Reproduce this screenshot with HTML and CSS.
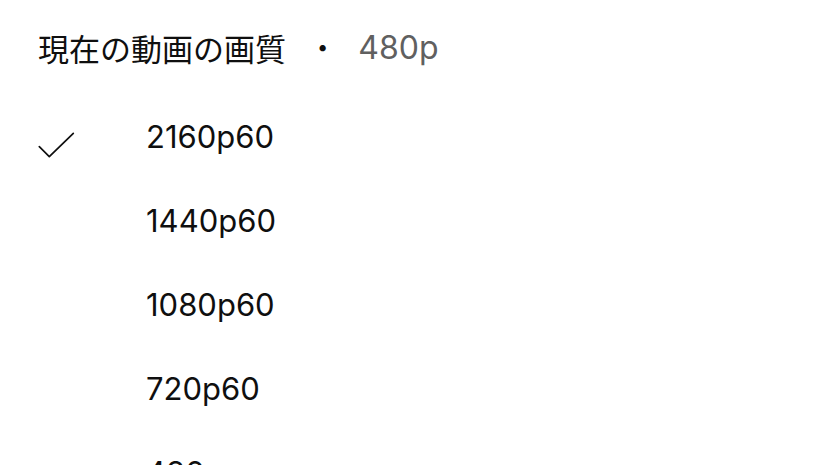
FILE: index.html
```html
<!DOCTYPE html>
<html lang="ja">

<head>
    <meta charset="UTF-8">
    <meta name="viewport" content="width=device-width, initial-scale=1.0">
    <title>画質</title>
    <link rel="stylesheet" href="styles.css">
</head>

<body>
    <div class="sheet">
        <div class="header">
            <span class="title">現在の動画の画質</span>
            <span class="dot">•</span>
            <span class="current">480p</span>
        </div>

        <ul class="quality-list">
            <li class="quality-item selected">
                <span class="check">
                    <svg width="40" height="48" viewBox="0 0 40 48">
                        <path d="M3.3 34.7 L13.3 44.7 L37.3 21.3" fill="none" stroke="#0f0f0f" stroke-width="1.7" stroke-linecap="round" stroke-linejoin="round" />
                    </svg>
                </span>
                <span class="label">2160p60</span>
            </li>
            <li class="quality-item">
                <span class="check"></span>
                <span class="label">1440p60</span>
            </li>
            <li class="quality-item">
                <span class="check"></span>
                <span class="label">1080p60</span>
            </li>
            <li class="quality-item">
                <span class="check"></span>
                <span class="label">720p60</span>
            </li>
            <li class="quality-item">
                <span class="check"></span>
                <span class="label">480p</span>
            </li>
        </ul>
    </div>
</body>

</html>
```

FILE: styles.css
```css
body {
    margin: 0;
    background-color: #fff;
    color: #0f0f0f;
    font-family: Inter, "Noto Sans CJK JP", sans-serif;
    overflow: hidden;
}

.sheet {
    width: 827px;
}

.header {
    display: flex;
    align-items: center;
    height: 94px;
    padding-left: 38px;
    font-size: 32px;
}

.title {
    font-family: "Noto Sans CJK JP", sans-serif;
    font-size: 31px;
}

.dot {
    font-size: 20px;
    margin: 0 30px 0 31px;
}

.current {
    color: #606060;
}

.quality-list {
    list-style: none;
    margin: 0;
    padding: 0;
}

.quality-item {
    display: flex;
    align-items: center;
    height: 84px;
    padding-left: 36px;
    font-size: 31px;
}

.check {
    width: 110px;
    height: 48px;
    flex-shrink: 0;
}

.check svg {
    display: block;
}
```
